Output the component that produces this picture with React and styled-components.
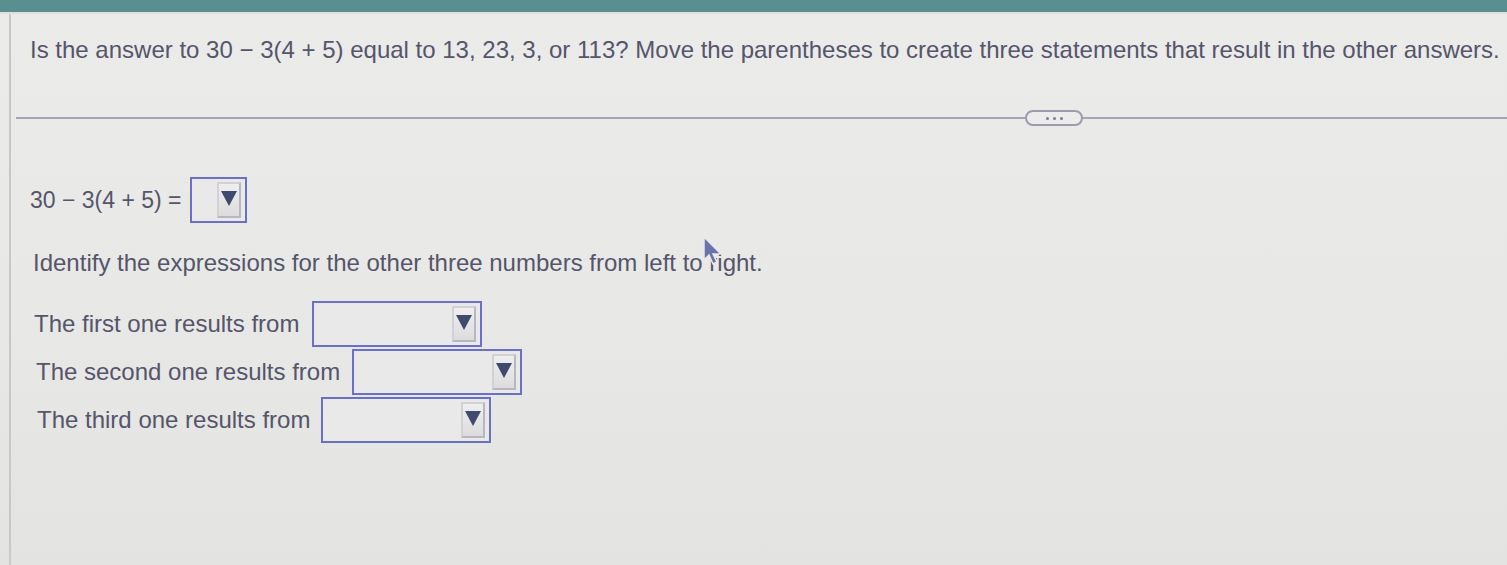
import React from 'react';
import styled, { createGlobalStyle } from 'styled-components';

const GlobalStyle = createGlobalStyle`
  html, body {
    margin: 0;
    padding: 0;
    background: #e6e6e4;
  }
  body {
    font-family: "Liberation Sans", Arial, sans-serif;
    color: #55556b;
  }
`;

const Page = styled.div`
  position: relative;
  width: 1507px;
  height: 565px;
  overflow: hidden;
  background: linear-gradient(180deg, #ebebe9 0%, #e8e8e6 55%, #e3e3e1 100%);
`;

const TopBar = styled.div`
  height: 12px;
  background: #5a8f90;
  border-bottom: 2px solid #dde1e0;
`;

const Body = styled.div`
  border-left: 2px solid #c8c8cc;
  margin-left: 9px;
  height: 100%;
`;

const Question = styled.p`
  margin: 0;
  padding: 22px 0 0 19px;
  font-size: 24px;
  line-height: 28px;
  white-space: nowrap;
`;

const Divider = styled.div`
  position: relative;
  margin: 53px 0 0 5px;
  height: 2px;
  background: #a4a4b4;
`;

const More = styled.div`
  position: absolute;
  left: 1009px;
  top: -7px;
  box-sizing: border-box;
  width: 58px;
  height: 16px;
  border: 2px solid #9c9cac;
  border-radius: 8px;
  background: #ececec;
  display: flex;
  align-items: center;
  justify-content: center;
  gap: 4px;
`;

const Dot = styled.span`
  width: 3px;
  height: 3px;
  border-radius: 50%;
  background: #7c7c90;
`;

const Content = styled.div`
  padding: 58px 0 0 19px;
`;

const EquationRow = styled.div`
  display: flex;
  align-items: center;
  gap: 8px;
  font-size: 23px;
`;

const Prompt = styled.p`
  margin: 26px 0 0 3px;
  font-size: 24px;
  line-height: 28px;
  white-space: nowrap;
`;

const Rows = styled.div`
  margin: 24px 0 0 4px;
  display: flex;
  flex-direction: column;
  gap: 2px;
`;

const Row = styled.div`
  display: flex;
  align-items: center;
  gap: ${p => p.$gap}px;
  font-size: 24px;
  padding-left: ${p => p.$indent}px;
`;

const Select = styled.div`
  box-sizing: border-box;
  width: ${p => p.$width}px;
  height: 46px;
  border: 2px solid #6c70c4;
  background: #e9e9e9;
  display: flex;
  align-items: center;
  justify-content: flex-end;
  padding-right: 4px;
`;

const ArrowButton = styled.div`
  box-sizing: border-box;
  width: 24px;
  height: 36px;
  border: 2px solid #d2d2d5;
  border-right-color: #b8b8bc;
  border-bottom-color: #b8b8bc;
  background: linear-gradient(180deg, #efefef, #dcdcde);
  display: flex;
  align-items: flex-start;
  justify-content: center;
  padding-top: 7px;
`;

const Cursor = styled.svg`
  position: absolute;
  left: 703px;
  top: 236px;
`;

const Dropdown = ({ width }) => (
  <Select $width={width}>
    <ArrowButton>
      <svg width="16" height="15" viewBox="0 0 16 15">
        <path d="M0 0 H16 L8 15 Z" fill="#3e4a6e" />
      </svg>
    </ArrowButton>
  </Select>
);

const rows = [
  { label: 'The first one results from', indent: 0, gap: 13 },
  { label: 'The second one results from', indent: 2, gap: 12 },
  { label: 'The third one results from', indent: 3, gap: 11 },
];

export default function App() {
  return (
    <Page>
      <GlobalStyle />
      <TopBar />
      <Body>
        <Question>
          Is the answer to 30 − 3(4 + 5) equal to 13, 23, 3, or 113? Move the parentheses to create three
          statements that result in the other answers.
        </Question>
        <Divider>
          <More>
            <Dot />
            <Dot />
            <Dot />
          </More>
        </Divider>
        <Content>
          <EquationRow>
            <span>30 − 3(4 + 5) =</span>
            <Dropdown width={57} />
          </EquationRow>
          <Prompt>Identify the expressions for the other three numbers from left to right.</Prompt>
          <Rows>
            {rows.map(r => (
              <Row key={r.label} $indent={r.indent} $gap={r.gap}>
                <span>{r.label}</span>
                <Dropdown width={170} />
              </Row>
            ))}
          </Rows>
        </Content>
      </Body>
      <Cursor width="20" height="30" viewBox="0 0 20 30">
        <path d="M1 1 L1 24 L6 19 L10 28 L14 26 L10 18 L18 18 Z" fill="#6a74a8" stroke="#e8e8ee" strokeWidth="1.5" />
      </Cursor>
    </Page>
  );
}
